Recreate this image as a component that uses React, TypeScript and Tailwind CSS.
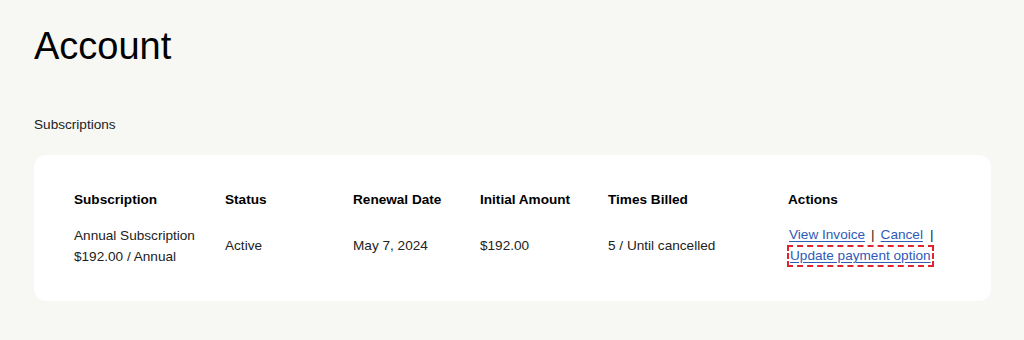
const COLS = "grid grid-cols-[151px_128px_127px_128px_180px_1fr]";

export default function App() {
  return (
    <div className="min-h-[340px] bg-[#f7f7f3] px-[34px] pt-[22px] font-['Liberation_Sans',Arial,sans-serif] text-[#1c1c1c]">
      <h1 className="text-[38px] leading-[48px] font-normal text-black">Account</h1>
      <h2 className="mt-[45px] text-[13.6px] leading-[20px] text-[#222]">Subscriptions</h2>

      <div className="mt-[20px] w-[957px] rounded-[12px] bg-white px-[40px] pt-[35px] pb-[34px]">
        <div className={`${COLS} text-[13.6px] font-bold leading-[20px] text-black`}>
          <div>Subscription</div>
          <div>Status</div>
          <div>Renewal Date</div>
          <div>Initial Amount</div>
          <div>Times Billed</div>
          <div>Actions</div>
        </div>

        <div className={`${COLS} mt-[14px] items-center text-[13.6px] leading-[21px] text-[#222]`}>
          <div>
            <div>Annual Subscription</div>
            <div>$192.00 / Annual</div>
          </div>
          <div>Active</div>
          <div>May 7, 2024</div>
          <div>$192.00</div>
          <div>5 / Until cancelled</div>
          <div>
            <div className="pl-[1px]">
              <a href="#" className="text-[#2f5bb7] underline underline-offset-2">View Invoice</a>
              <span className="mx-[6px]">|</span>
              <a href="#" className="text-[#2f5bb7] underline underline-offset-2">Cancel</a>
              <span className="ml-[7px]">|</span>
            </div>
            <a
              href="#"
              className="-ml-[1px] inline-block border-2 border-dashed border-[#e0242f] px-[1px] leading-[18px] text-[#2f5bb7] underline underline-offset-2"
            >
              Update payment option
            </a>
          </div>
        </div>
      </div>
    </div>
  );
}
